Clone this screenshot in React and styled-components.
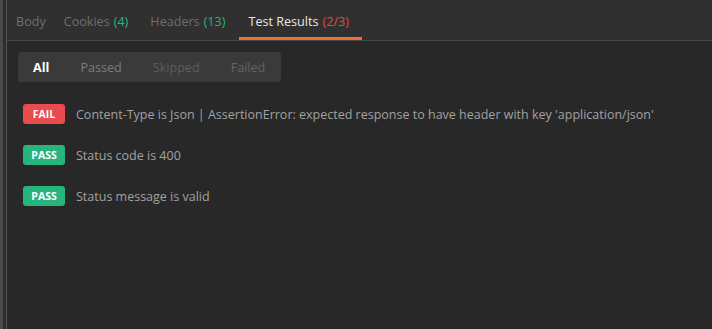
import React, { useState } from 'react';
import styled, { createGlobalStyle } from 'styled-components';

const GlobalStyle = createGlobalStyle`
  html, body {
    margin: 0;
    padding: 0;
    height: 100%;
    background: #282828;
  }
  #root {
    height: 100%;
  }
`;

const tabs = [
  { label: 'Body' },
  { label: 'Cookies', count: '(4)', tone: 'good' },
  { label: 'Headers', count: '(13)', tone: 'good' },
  { label: 'Test Results', count: '(2/3)', tone: 'bad', active: true },
];

const filters = ['All', 'Passed', 'Skipped', 'Failed'];

const results = [
  { status: 'fail', text: "Content-Type is Json | AssertionError: expected response to have header with key 'application/json'" },
  { status: 'pass', text: 'Status code is 400' },
  { status: 'pass', text: 'Status message is valid' },
];

const App = () => {
  const [filter, setFilter] = useState('All');

  return (
    <>
      <GlobalStyle />
      <Frame>
        <Gutter />
        <Pane>
          <TabBar>
            {tabs.map((tab) => (
              <Tab key={tab.label} active={tab.active}>
                {tab.label}
                {tab.count && <Count tone={tab.tone}>{tab.count}</Count>}
              </Tab>
            ))}
          </TabBar>
          <Content>
            <FilterGroup>
              {filters.map((f) => (
                <FilterButton key={f} selected={filter === f} onClick={() => setFilter(f)}>
                  {f}
                </FilterButton>
              ))}
            </FilterGroup>
            <ResultList>
              {results.map((r) => (
                <ResultRow key={r.text}>
                  <Badge status={r.status}>{r.status === 'fail' ? 'FAIL' : 'PASS'}</Badge>
                  <ResultText>{r.text}</ResultText>
                </ResultRow>
              ))}
            </ResultList>
          </Content>
        </Pane>
      </Frame>
    </>
  );
};
export default App;

const Frame = styled.div`
  display: flex;
  height: 100vh;
  font-family: 'Open Sans', 'Liberation Sans', sans-serif;
  overflow: hidden;
`;

const Gutter = styled.div`
  width: 3px;
  flex-shrink: 0;
  background: #4a4a4a;
  border-right: 3px solid #2d2d2d;
  box-shadow: 1px 0 0 #555555;
  margin-right: 1px;
`;

const Pane = styled.div`
  flex: 1;
  display: flex;
  flex-direction: column;
  background: #282828;
  min-width: 0;
`;

const TabBar = styled.div`
  display: flex;
  align-items: stretch;
  gap: 4px;
  height: 40px;
  background: #303030;
  border-bottom: 1px solid #474747;
  box-sizing: content-box;
`;

const Tab = styled.div`
  display: flex;
  align-items: center;
  padding: 5px ${({ active }) => (active ? '13px' : '9px')} 0 9px;
  font-size: 12.6px;
  color: ${({ active }) => (active ? '#e8e8e8' : '#6e6e6e')};
  border-bottom: 3px solid ${({ active }) => (active ? '#f26b3a' : 'transparent')};
  white-space: nowrap;
  &:first-child {
    margin-right: -4px;
  }
  &:last-child {
    margin-left: 1px;
  }
`;

const Count = styled.span`
  margin-left: 4px;
  color: ${({ tone }) => (tone === 'bad' ? '#e04848' : '#26b47f')};
`;

const Content = styled.div`
  padding: 11px 0 0 11px;
`;

const FilterGroup = styled.div`
  display: inline-flex;
  align-items: center;
  height: 30px;
  background: #3a3a3a;
  border-radius: 3px;
`;

const FilterButton = styled.button`
  border: none;
  background: transparent;
  font-family: inherit;
  font-size: 12.6px;
  padding: 0 16px 0 15px;
  height: 30px;
  cursor: pointer;
  color: ${({ selected }) => (selected ? '#ffffff' : '#6e6e6e')};
  font-weight: ${({ selected }) => (selected ? 700 : 400)};
  &:nth-child(2) {
    color: ${({ selected }) => (selected ? '#ffffff' : '#7c7c7c')};
  }
  &:nth-child(3) {
    color: ${({ selected }) => (selected ? '#ffffff' : '#5e5e5e')};
  }
  &:nth-child(4) {
    color: ${({ selected }) => (selected ? '#ffffff' : '#636363')};
  }
`;

const ResultList = styled.div`
  display: flex;
  flex-direction: column;
  gap: 21px;
  padding: 22px 0 0 5px;
`;

const ResultRow = styled.div`
  display: flex;
  align-items: center;
  gap: 11px;
  height: 20px;
`;

const Badge = styled.span`
  display: inline-flex;
  align-items: center;
  justify-content: center;
  width: 42px;
  height: 20px;
  border-radius: 3px;
  font-size: 10.5px;
  font-weight: 700;
  color: #ffffff;
  background: ${({ status }) => (status === 'fail' ? '#e84c4c' : '#26b47f')};
`;

const ResultText = styled.span`
  font-size: 12.5px;
  color: #a2a2a2;
  white-space: nowrap;
`;
